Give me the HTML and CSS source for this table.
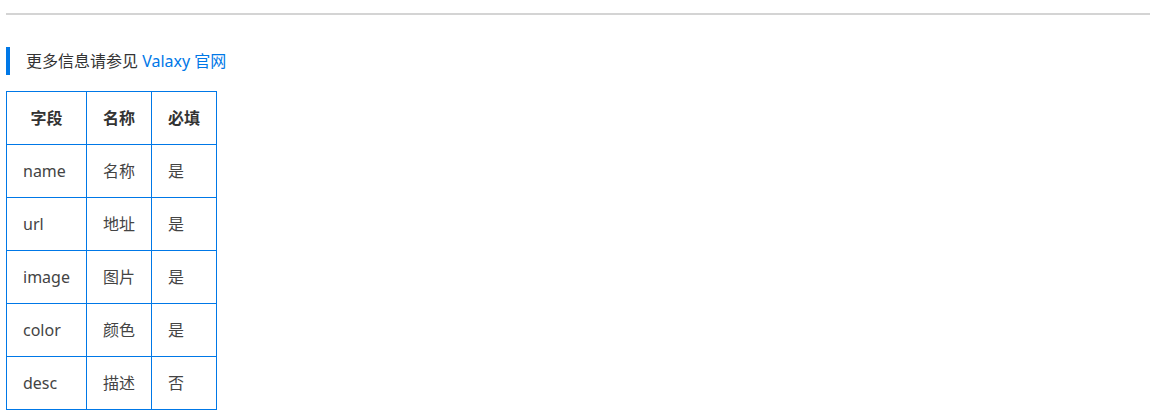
FILE: index.html
```html
<!DOCTYPE html>
<html lang="zh-CN">
<head>
    <meta charset="UTF-8">
    <title>Valaxy</title>
    <link rel="stylesheet" href="styles.css">
</head>
<body>

<div class="page">
    <hr class="divider">

    <blockquote class="tip">
        <p>更多信息请参见 <a href="#">Valaxy 官网</a></p>
    </blockquote>

    <table class="fields">
        <thead>
            <tr>
                <th>字段</th>
                <th>名称</th>
                <th>必填</th>
            </tr>
        </thead>
        <tbody>
            <tr><td>name</td><td>名称</td><td>是</td></tr>
            <tr><td>url</td><td>地址</td><td>是</td></tr>
            <tr><td>image</td><td>图片</td><td>是</td></tr>
            <tr><td>color</td><td>颜色</td><td>是</td></tr>
            <tr><td>desc</td><td>描述</td><td>否</td></tr>
        </tbody>
    </table>
</div>

</body>
</html>
```

FILE: styles.css
```css
body {
    margin: 0;
    background-color: #fff;
    font-family: "Noto Sans", "Noto Sans CJK SC", sans-serif;
    color: #333;
}

.page {
    padding: 13px 17px 0 6px;
}

.divider {
    margin: 0;
    height: 2px;
    border: none;
    background-color: #d4d4d4;
}

.tip {
    margin: 32px 0 16px 0;
    padding: 0 0 0 16px;
    border-left: 4px solid #0078e7;
}

.tip p {
    margin: 0;
    font-size: 16px;
    line-height: 28px;
    color: #333;
}

.tip a {
    color: #0078e7;
    text-decoration: none;
}

.fields {
    border-collapse: collapse;
    font-size: 16px;
}

.fields th,
.fields td {
    border: 1px solid #0078e7;
    padding: 14px 16px;
    line-height: 24px;
    color: #444;
}

.fields th {
    font-weight: bold;
    text-align: center;
    color: #333;
}

.fields td {
    text-align: left;
}
```
